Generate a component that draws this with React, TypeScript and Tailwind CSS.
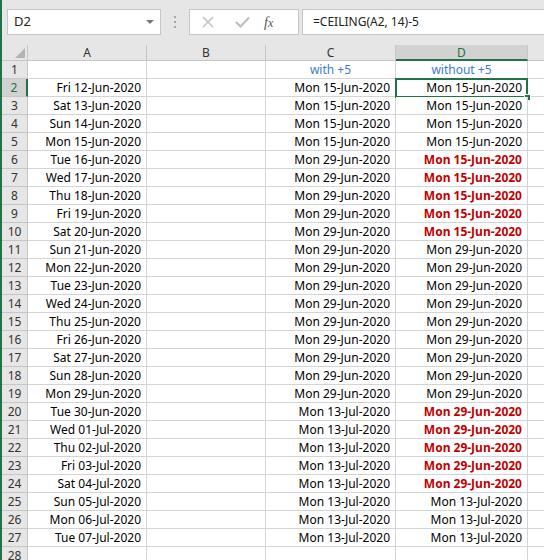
import React from "react";

const A = [
  "Fri 12-Jun-2020","Sat 13-Jun-2020","Sun 14-Jun-2020","Mon 15-Jun-2020","Tue 16-Jun-2020",
  "Wed 17-Jun-2020","Thu 18-Jun-2020","Fri 19-Jun-2020","Sat 20-Jun-2020","Sun 21-Jun-2020",
  "Mon 22-Jun-2020","Tue 23-Jun-2020","Wed 24-Jun-2020","Thu 25-Jun-2020","Fri 26-Jun-2020",
  "Sat 27-Jun-2020","Sun 28-Jun-2020","Mon 29-Jun-2020","Tue 30-Jun-2020","Wed 01-Jul-2020",
  "Thu 02-Jul-2020","Fri 03-Jul-2020","Sat 04-Jul-2020","Sun 05-Jul-2020","Mon 06-Jul-2020",
  "Tue 07-Jul-2020",
];

function cVal(r: number) {
  if (r <= 5) return "Mon 15-Jun-2020";
  if (r <= 19) return "Mon 29-Jun-2020";
  return "Mon 13-Jul-2020";
}
function dVal(r: number): [string, boolean] {
  if (r <= 5) return ["Mon 15-Jun-2020", false];
  if (r <= 10) return ["Mon 15-Jun-2020", true];
  if (r <= 19) return ["Mon 29-Jun-2020", false];
  if (r <= 24) return ["Mon 29-Jun-2020", true];
  return ["Mon 13-Jul-2020", false];
}

const font = { fontFamily: '"Noto Sans", sans-serif' };

function Row({ r }: { r: number }) {
  const sel = r === 2;
  const a = r >= 2 && r <= 27 ? A[r - 2] : "";
  const c = r >= 2 && r <= 27 ? cVal(r) : "";
  const d: [string, boolean] = r >= 2 && r <= 27 ? dVal(r) : ["", false];
  const cell = "h-[18px] shrink-0 border-r border-b border-[#d4d4d4] bg-white px-[5px] text-[12px] leading-[18px] whitespace-nowrap";
  return (
    <div className="flex">
      <div
        className={
          sel
            ? "h-[18px] w-[26px] shrink-0 border-r-2 border-b border-r-[#217346] border-b-[#c6c6c6] bg-[#d2d2d2] text-center text-[12px] leading-[18px] text-[#217346]"
            : "h-[18px] w-[26px] shrink-0 border-r border-b border-[#c6c6c6] bg-[#e6e6e6] text-center text-[12px] leading-[18px] text-[#333]"
        }
      >
        {r}
      </div>
      <div className={cell + " w-[119px] text-right text-black"}>{a}</div>
      <div className={cell + " w-[119px]"}></div>
      {r === 1 ? (
        <div className={cell + " w-[130px] text-center text-[#3a7cd0]"}>with +5</div>
      ) : (
        <div className={cell + " w-[130px] text-right text-black"}>{c}</div>
      )}
      {r === 1 ? (
        <div className={cell + " w-[132px] text-center text-[#3a7cd0]"}>without +5</div>
      ) : (
        <div className={cell + " relative w-[132px] text-right " + (d[1] ? "font-bold text-[#c00000]" : "text-black")}>
          {d[0]}
          {sel && (
            <>
              <div className="pointer-events-none absolute -left-px -top-px h-[20px] w-[133px] border-2 border-[#217346]"></div>
              <div className="absolute left-[128px] top-[15px] h-[7px] w-[7px] border border-white bg-[#217346]"></div>
            </>
          )}
        </div>
      )}
      <div className="h-[18px] flex-1 border-b border-[#d4d4d4] bg-white"></div>
    </div>
  );
}

export default function App() {
  const rows = Array.from({ length: 28 }, (_, i) => i + 1);
  return (
    <div className="h-[560px] w-[544px] overflow-hidden border-l-2 border-[#217346] bg-[#e6e6e6]" style={font}>
      <div className="flex h-[45px] items-start pt-[9px]">
        <div className="ml-[5px] flex h-[26px] w-[154px] items-center justify-between border border-[#c6c6c6] bg-white pl-[6px] pr-[6px]">
          <span className="text-[13px] text-[#222]">D2</span>
          <svg width="8" height="5" viewBox="0 0 8 5"><path d="M0 0 L8 0 L4 4 Z" fill="#777" /></svg>
        </div>
        <div className="ml-[13px] flex h-[26px] flex-col items-center justify-center gap-[3px]">
          <span className="h-[2px] w-[2px] bg-[#a6a6a6]"></span>
          <span className="h-[2px] w-[2px] bg-[#a6a6a6]"></span>
          <span className="h-[2px] w-[2px] bg-[#a6a6a6]"></span>
        </div>
        <div className="ml-[13px] flex h-[26px] w-[110px] items-center border border-[#c6c6c6] bg-white">
          <svg className="ml-[12px]" width="12" height="12" viewBox="0 0 12 12">
            <path d="M1 1 L11 11 M11 1 L1 11" stroke="#bdbdbd" strokeWidth="1.4" />
          </svg>
          <svg className="ml-[21px]" width="15" height="12" viewBox="0 0 15 12">
            <path d="M1 6 L5.5 10.5 L14 1.5" stroke="#bdbdbd" strokeWidth="2" fill="none" />
          </svg>
          <span
            className="ml-[14px] text-[14px] italic text-[#555]"
            style={{ fontFamily: '"Liberation Serif", serif' }}
          >
            f<span className="text-[12px]">x</span>
          </span>
        </div>
        <div className="ml-[3px] flex h-[26px] flex-1 items-center border border-r-0 border-[#c6c6c6] bg-white pl-[10px]">
          <span className="text-[12px] text-[#222]">=CEILING(A2, 14)-5</span>
        </div>
      </div>
      <div className="flex">
        <div className="relative h-[16px] w-[26px] shrink-0 border-r border-b border-[#c6c6c6] bg-[#e6e6e6]">
          <svg className="absolute bottom-[2px] right-[2px]" width="10" height="10" viewBox="0 0 10 10">
            <path d="M10 0 L10 10 L0 10 Z" fill="#b4b4b4" />
          </svg>
        </div>
        <div className="h-[16px] w-[119px] shrink-0 border-r border-b border-[#c6c6c6] bg-[#e6e6e6] text-center text-[12px] leading-[16px] text-[#333]">A</div>
        <div className="h-[16px] w-[119px] shrink-0 border-r border-b border-[#c6c6c6] bg-[#e6e6e6] text-center text-[12px] leading-[16px] text-[#333]">B</div>
        <div className="h-[16px] w-[130px] shrink-0 border-r border-b border-[#c6c6c6] bg-[#e6e6e6] text-center text-[12px] leading-[16px] text-[#333]">C</div>
        <div className="h-[16px] w-[132px] shrink-0 border-r border-b-2 border-r-[#c6c6c6] border-b-[#217346] bg-[#d2d2d2] text-center text-[12px] leading-[15px] text-[#217346]">D</div>
        <div className="h-[16px] flex-1 border-b border-[#c6c6c6] bg-[#e6e6e6]"></div>
      </div>
      {rows.map((r) => (
        <Row key={r} r={r} />
      ))}
    </div>
  );
}
